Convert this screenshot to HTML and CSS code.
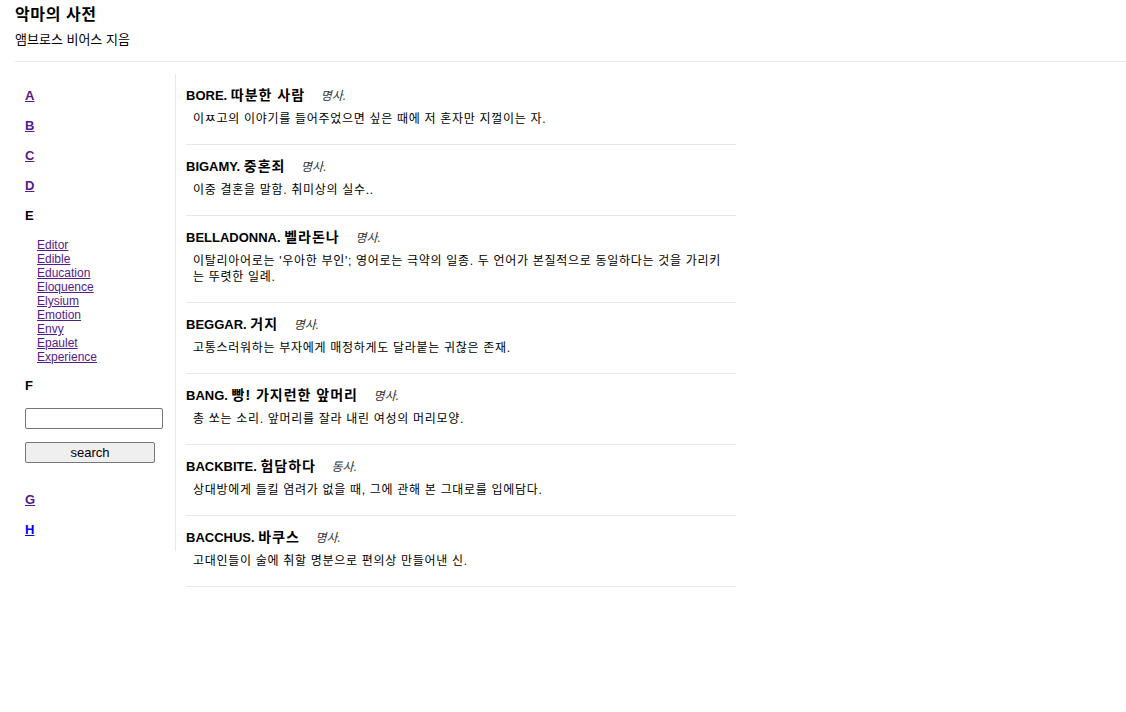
FILE: index.html
```html
<!DOCTYPE html>
<html lang="ko">
<head>
    <meta charset="UTF-8">
    <meta name="viewport" content="width=device-width, initial-scale=1.0">
    <title>악마의 사전</title>
    <link rel="stylesheet" href="styles.css">
</head>
<body>
    <div class="header">
        <h1>악마의 사전</h1>
        <p class="author">앰브로스 비어스 지음</p>
    </div>

    <div class="main">
        <ul class="index">
            <li><a class="visited" href="#a">A</a></li>
            <li><a class="visited" href="#b">B</a></li>
            <li><a class="visited" href="#c">C</a></li>
            <li><a class="visited" href="#d">D</a></li>
            <li class="current">E
                <ul class="words">
                    <li><a href="#editor">Editor</a></li>
                    <li><a href="#edible">Edible</a></li>
                    <li><a href="#education">Education</a></li>
                    <li><a href="#eloquence">Eloquence</a></li>
                    <li><a href="#elysium">Elysium</a></li>
                    <li><a href="#emotion">Emotion</a></li>
                    <li><a href="#envy">Envy</a></li>
                    <li><a href="#epaulet">Epaulet</a></li>
                    <li><a href="#experience">Experience</a></li>
                </ul>
            </li>
            <li class="current">F</li>
            <li class="search">
                <form>
                    <input type="text" name="q">
                    <button type="button">search</button>
                </form>
            </li>
            <li><a class="visited" href="#g">G</a></li>
            <li><a href="#h">H</a></li>
        </ul>

        <div class="entries">
            <div class="entry">
                <h2>BORE. <span class="ko">따분한 사람</span> <span class="pos">명사.</span></h2>
                <p>이ㅉ고의 이야기를 들어주었으면 싶은 때에 저 혼자만 지껄이는 자.</p>
            </div>
            <div class="entry">
                <h2>BIGAMY. <span class="ko">중혼죄</span> <span class="pos">명사.</span></h2>
                <p>이중 결혼을 말함. 취미상의 실수..</p>
            </div>
            <div class="entry">
                <h2>BELLADONNA. <span class="ko">벨라돈나</span> <span class="pos">명사.</span></h2>
                <p>이탈리아어로는 '우아한 부인'; 영어로는 극약의 일종. 두 언어가 본질적으로 동일하다는 것을 가리키는 뚜렷한 일례.</p>
            </div>
            <div class="entry">
                <h2>BEGGAR. <span class="ko">거지</span> <span class="pos">명사.</span></h2>
                <p>고통스러워하는 부자에게 매정하게도 달라붙는 귀찮은 존재.</p>
            </div>
            <div class="entry">
                <h2>BANG. <span class="ko">빵! 가지런한 앞머리</span> <span class="pos">명사.</span></h2>
                <p>총 쏘는 소리. 앞머리를 잘라 내린 여성의 머리모양.</p>
            </div>
            <div class="entry">
                <h2>BACKBITE. <span class="ko">험담하다</span> <span class="pos">동사.</span></h2>
                <p>상대방에게 들킬 염려가 없을 때, 그에 관해 본 그대로를 입에담다.</p>
            </div>
            <div class="entry">
                <h2>BACCHUS. <span class="ko">바쿠스</span> <span class="pos">명사.</span></h2>
                <p>고대인들이 술에 취할 명분으로 편의상 만들어낸 신.</p>
            </div>
        </div>
    </div>
</body>
</html>
```

FILE: styles.css
```css
body {
    font-family: "Liberation Sans", Arial, "Noto Sans CJK KR", sans-serif;
    margin: 0;
    color: #000;
    background-color: #fff;
}

.header {
    margin-left: 15px;
    padding-top: 5px;
    height: 56px;
    border-bottom: 1px solid #e8e8e8;
}
.header h1 {
    font-size: 16px;
    line-height: 20px;
    letter-spacing: 0.6px;
    margin: 0;
}
.author {
    font-size: 13px;
    line-height: 16px;
    margin: 7px 0 0;
}

.main {
    display: flex;
    align-items: flex-start;
    margin: 12px 0 0 15px;
}

.index {
    list-style: none;
    margin: 0;
    padding: 14px 0 13px 10px;
    width: 150px;
    border-right: 1px solid #e8e8e8;
    display: flex;
    flex-direction: column;
    gap: 14px;
}
.index > li {
    font-size: 13px;
    font-weight: bold;
    line-height: 16px;
}
.index a {
    color: #0000ee;
}
.index a.visited {
    color: #551a8b;
}
.index .search {
    padding-bottom: 15px;
}

.words {
    list-style: none;
    margin: 14px 0 0;
    padding-left: 12px;
}
.words li {
    font-size: 12px;
    font-weight: normal;
    line-height: 14px;
}
.words a {
    color: #551a8b;
}

.search form {
    display: flex;
    flex-direction: column;
    align-items: flex-start;
    gap: 13px;
}
.search input {
    width: 138px;
    height: 21px;
    box-sizing: border-box;
    border: 1px solid #767676;
    border-radius: 2px;
    margin: 0;
    padding: 1px 2px;
}
.search button {
    width: 130px;
    height: 21px;
    box-sizing: border-box;
    font-family: "Liberation Sans", Arial, sans-serif;
    font-size: 13px;
    background-color: #efefef;
    border: 1px solid #767676;
    border-radius: 2px;
    margin: 0;
    padding: 0;
}

.entries {
    width: 550px;
    margin-left: 10px;
}
.entry {
    padding: 13px 0 18px;
    border-bottom: 1px solid #e8e8e8;
}
.entry h2 {
    font-size: 13px;
    line-height: 18px;
    height: 18px;
    margin: 0;
}
.ko {
    font-size: 14px;
    line-height: 1;
    letter-spacing: 1px;
}
.pos {
    font-size: 12px;
    line-height: 1;
    font-weight: normal;
    font-style: italic;
    color: #333;
    margin-left: 12px;
}
.entry p {
    font-size: 12px;
    line-height: 16px;
    letter-spacing: 0.7px;
    margin: 6px 0 0;
    padding: 0 7px;
}
.entry p {
    margin-bottom: -1px;
}
```
